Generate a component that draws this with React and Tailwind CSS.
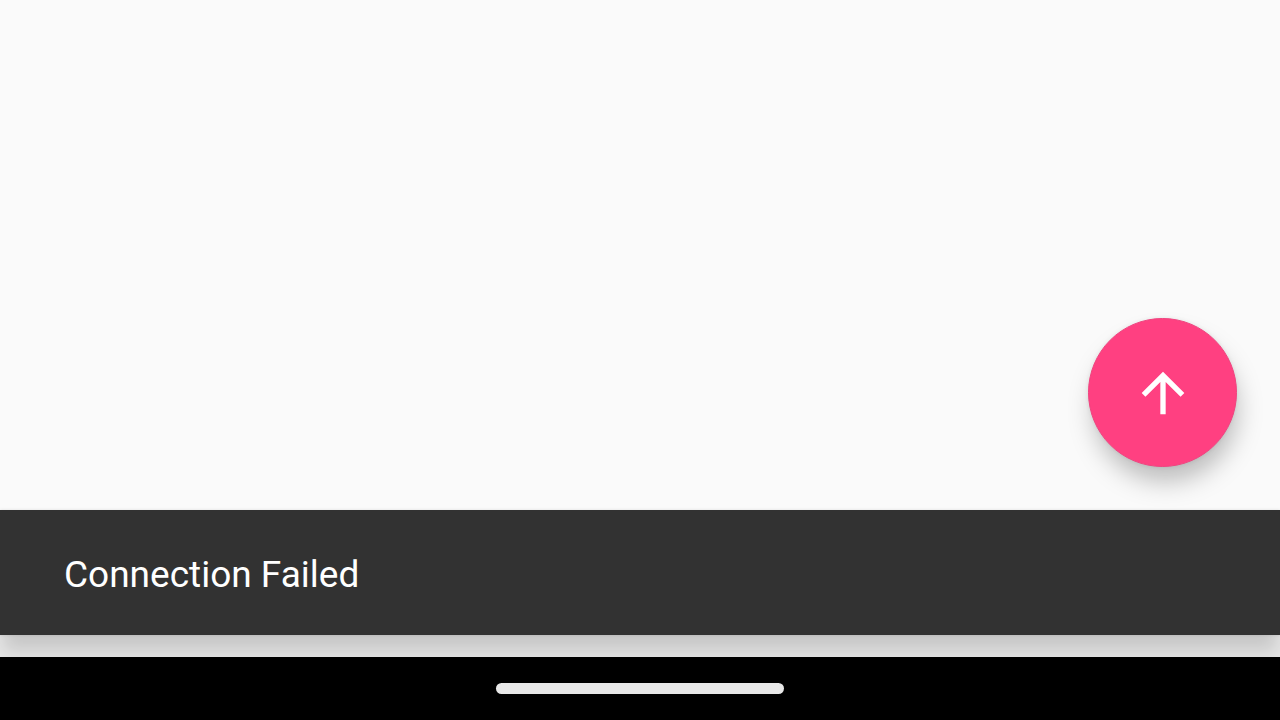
const ArrowUpIcon = () => (
    <svg viewBox="0 0 24 24" fill="currentColor" aria-hidden="true" className="size-16">
        <path d="M4 12l1.41 1.41L11 7.83V20h2V7.83l5.58 5.59L20 12l-8-8-8 8z" />
    </svg>
);

// Full-width message bar, the shadow falls on the strip below it
const Snackbar = ({ message }) => (
    <div
        role="status"
        className="relative bg-[#323232] px-16 pt-[43px] pb-[38px] text-[37px] leading-[44px] text-white shadow-[0_20px_16px_-4px_rgba(0,0,0,0.13),0_0_3px_rgba(0,0,0,0.12)]"
    >
        {message}
    </div>
);

const NavigationBar = () => (
    <footer className="relative flex h-[63px] items-center justify-center bg-black">
        <div className="h-[11px] w-72 rounded-full bg-[#e8e8e8]" />
    </footer>
);

const App = () => {
    return (
        <div className="flex min-h-screen flex-col overflow-hidden bg-[#fafafa] font-['Roboto',sans-serif]">
            <main className="flex flex-1 items-end justify-end p-[43px]">
                <button
                    type="button"
                    aria-label="Scroll to top"
                    className="flex size-[149px] items-center justify-center rounded-full border border-[#f0437f] bg-[#ff4081] text-white shadow-[3px_17px_26px_-3px_rgba(0,0,0,0.26),0_0_4px_rgba(0,0,0,0.08)]"
                >
                    <ArrowUpIcon />
                </button>
            </main>

            <div className="bg-[#e6e6e6] pb-[22px]">
                <Snackbar message="Connection Failed" />
            </div>

            <NavigationBar />
        </div>
    );
};

export default App;
